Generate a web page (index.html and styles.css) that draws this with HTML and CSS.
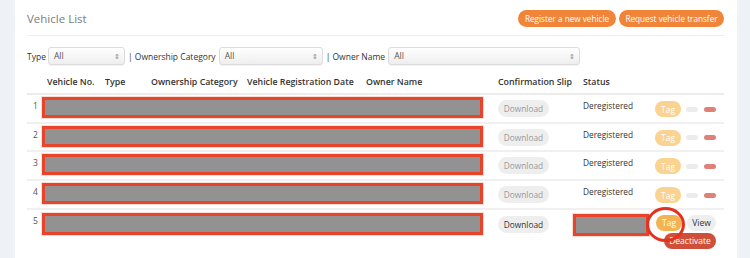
FILE: index.html
```html
<!DOCTYPE html>
<html>
<head>
<meta charset="utf-8">
<link rel="stylesheet" href="styles.css">
</head>
<body>
<div class="page">
  <div class="card">
    <div class="head">
      <div class="title">Vehicle List</div>
      <div class="actions-top">
        <span class="btn-orange btn-reg">Register a new vehicle</span>
        <span class="btn-orange btn-req">Request vehicle transfer</span>
      </div>
    </div>
    <div class="filters">
      <span class="flabel">Type</span>
      <span class="select sel-type"><span>All</span><span class="arrows">&#8661;</span></span>
      <span class="flabel">| Ownership Category</span>
      <span class="select sel-own"><span>All</span><span class="arrows">&#8661;</span></span>
      <span class="flabel">| Owner Name</span>
      <span class="select sel-name"><span>All</span><span class="arrows">&#8661;</span></span>
    </div>
    <div class="table">
      <div class="row thead">
        <div></div>
        <div class="th">Vehicle No.</div>
        <div class="th">Type</div>
        <div class="th">Ownership Category</div>
        <div class="th">Vehicle Registration Date</div>
        <div class="th">Owner Name</div>
        <div class="th">Confirmation Slip</div>
        <div class="th">Status</div>
        <div></div>
      </div>
      <div class="row tr">
        <div class="num">1</div>
        <div class="redact wide"></div>
        <div class="slip"><span class="pill-dl faded">Download</span></div>
        <div class="status">Deregistered</div>
        <div class="acts"><span class="tag faded">Tag</span><span class="mini grey"></span><span class="mini red"></span></div>
      </div>
      <div class="row tr">
        <div class="num">2</div>
        <div class="redact wide"></div>
        <div class="slip"><span class="pill-dl faded">Download</span></div>
        <div class="status">Deregistered</div>
        <div class="acts"><span class="tag faded">Tag</span><span class="mini grey"></span><span class="mini red"></span></div>
      </div>
      <div class="row tr">
        <div class="num">3</div>
        <div class="redact wide"></div>
        <div class="slip"><span class="pill-dl faded">Download</span></div>
        <div class="status">Deregistered</div>
        <div class="acts"><span class="tag faded">Tag</span><span class="mini grey"></span><span class="mini red"></span></div>
      </div>
      <div class="row tr">
        <div class="num">4</div>
        <div class="redact wide"></div>
        <div class="slip"><span class="pill-dl faded">Download</span></div>
        <div class="status">Deregistered</div>
        <div class="acts"><span class="tag faded">Tag</span><span class="mini grey"></span><span class="mini red"></span></div>
      </div>
      <div class="row tr last">
        <div class="num">5</div>
        <div class="redact wide"></div>
        <div class="slip"><span class="pill-dl">Download</span></div>
        <div class="status"><div class="redact small"></div></div>
        <div class="acts wrap">
          <span class="tag strong">Tag</span><span class="view">View</span>
          <span class="deact">Deactivate</span>
          <span class="ring"></span>
        </div>
      </div>
    </div>
  </div>
</div>
</body>
</html>
```
FILE: styles.css
```css
* { box-sizing: border-box; }
html, body { margin: 0; padding: 0; }
body {
  width: 750px; height: 258px; overflow: hidden;
  background: #eef2f7;
  font-family: "Open Sans", "Noto Sans", sans-serif;
  color: #333;
}
.page { padding: 0 13px 0 15px; height: 258px; }
.card { background: #fff; height: 258px; padding: 0 13px 0 12px; }

.head {
  display: flex; justify-content: space-between; align-items: center;
  height: 36px; border-bottom: 1px solid #eeeeee;
  padding-top: 1px;
}
.title { font-size: 11.5px; color: #7d7d7d; }
.actions-top { display: flex; gap: 3px; }
.btn-orange {
  display: inline-flex; align-items: center; justify-content: center;
  height: 17px; border-radius: 9px; background: #f08539;
  color: #fff; font-size: 8.2px; font-weight: 400; white-space: nowrap;
}
.btn-reg { width: 98px; }
.btn-req { width: 105px; }

.filters {
  display: flex; align-items: center; margin-top: 11px; height: 18px;
  font-size: 8.5px; color: #333;
}
.flabel { white-space: nowrap; }
.select {
  display: flex; justify-content: space-between; align-items: center;
  height: 18px; border: 1px solid #dcdcdc; border-radius: 3px;
  background: linear-gradient(#ffffff, #eeeeee);
  padding: 0 4px 0 5px; color: #555; font-size: 8.6px;
  box-shadow: 0 1px 1px rgba(0,0,0,0.05);
}
.arrows { font-size: 7px; color: #888; }
.sel-type { width: 77px; margin: 0 3px 0 2px; }
.sel-own { width: 104px; margin: 0 3px 0 3px; }
.sel-name { width: 192px; margin-left: 3px; }

.table { margin-top: 5px; }
.row {
  display: grid;
  grid-template-columns: 15px 58px 46px 96px 119px 132px 85px 72px 74px;
}
.thead { height: 25px; border-bottom: 2px solid #ececec; align-items: center; }
.th { font-size: 8.8px; font-weight: 600; padding-left: 5px; white-space: nowrap; color: #333; }
.tr { height: 28.7px; border-bottom: 2px solid #f0f0f0; }
.tr.last { border-bottom: none; height: 44px; }
.num { font-size: 8.5px; color: #555; padding: 5px 0 0 6px; }
.redact {
  background: #929292; border: 3px solid #e8432b;
  box-shadow: 0 0 0 1px rgba(240,120,100,0.25);
  height: 21px; margin-top: 2px;
}
.wide { grid-column: 2 / span 5; margin-right: 10px; }
.last .wide { margin-top: 3px; height: 22px; }
.slip { padding-left: 5px; }
.pill-dl {
  display: inline-flex; align-items: center; justify-content: center;
  width: 51px; height: 17px; margin-top: 5px; border-radius: 9px;
  background: #eeeeee; color: #333; font-size: 8.3px;
}
.pill-dl.faded { color: #999; }
.last .pill-dl { margin-top: 6px; }
.status { font-size: 8.3px; padding: 5px 0 0 5px; color: #333; white-space: nowrap; }
.last .status { padding: 3px 0 0 0; margin-left: -5px; }
.redact.small { margin-top: 1px; width: 76px; height: 22px; }
.acts {
  display: flex; align-items: center; justify-content: flex-end;
  padding-right: 8px; height: 26px; padding-top: 2px;
  position: relative;
}
.tag {
  display: inline-flex; align-items: center; justify-content: center;
  width: 26px; height: 16px; border-radius: 8px;
  color: #fff; font-size: 8.5px;
}
.tag.faded { background: #f9d38f; }
.tag.strong { background: #f4b352; }
.mini { width: 12px; height: 5px; border-radius: 3px; }
.mini.grey { background: #ececec; margin-left: 5px; }
.mini.red { background: #df8176; margin-left: 6px; }
.acts.wrap { flex-wrap: wrap; height: auto; padding-top: 5px; row-gap: 2px; align-content: flex-start; }
.view {
  display: inline-flex; align-items: center; justify-content: center;
  width: 29px; height: 16px; border-radius: 8px; margin-left: 5px;
  background: #eeeeee; color: #333; font-size: 8.5px;
}
.deact {
  display: inline-flex; align-items: center; justify-content: center;
  width: 52px; height: 16px; border-radius: 8px;
  background: #cf4f3a; color: #fff; font-size: 8.5px;
}
.ring {
  position: absolute; left: -4px; top: -3px;
  width: 39px; height: 35px; border-radius: 50%;
  border: 3px solid #e5321f;
}
```
